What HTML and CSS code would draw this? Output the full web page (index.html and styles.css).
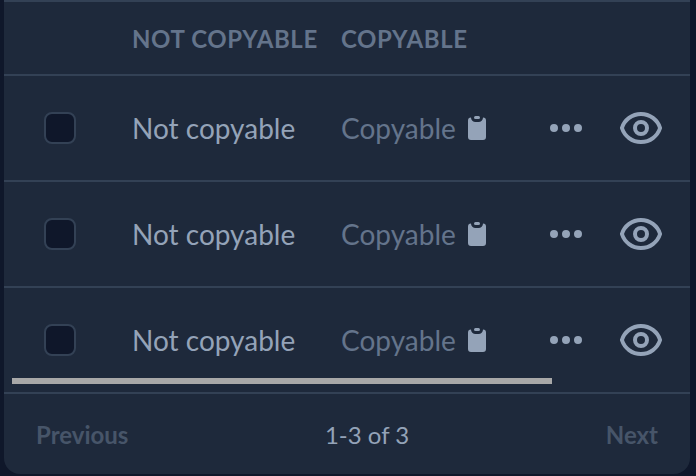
FILE: index.html
```html
<!DOCTYPE html>
<html lang="en">
<head>
<meta charset="utf-8">
<title>Table</title>
<link rel="stylesheet" href="styles.css">
</head>
<body>
<div class="card">
  <div class="row head">
    <div class="cell-check"></div>
    <div class="cell-a">NOT COPYABLE</div>
    <div class="cell-b">COPYABLE</div>
  </div>
  <div class="row">
    <div class="cell-check"><span class="checkbox"></span></div>
    <div class="cell-a">Not copyable</div>
    <div class="cell-b">Copyable <svg class="clip" viewBox="0 0 20 20" fill="currentColor"><path d="M8 3a1 1 0 011-1h2a1 1 0 110 2H9a1 1 0 01-1-1z"/><path d="M6 3a2 2 0 00-2 2v11a2 2 0 002 2h8a2 2 0 002-2V5a2 2 0 00-2-2 3 3 0 01-3 3H9a3 3 0 01-3-3z"/></svg></div>
    <svg class="dots" viewBox="0 0 20 20" fill="currentColor"><path d="M6 10a2 2 0 11-4 0 2 2 0 014 0zM12 10a2 2 0 11-4 0 2 2 0 014 0zM16 12a2 2 0 100-4 2 2 0 000 4z"/></svg>
    <svg class="eye" viewBox="0 0 24 24" fill="none" stroke="currentColor" stroke-width="2" stroke-linecap="round" stroke-linejoin="round"><path d="M15 12a3 3 0 11-6 0 3 3 0 016 0z"/><path d="M2.458 12C3.732 7.943 7.523 5 12 5c4.478 0 8.268 2.943 9.542 7-1.274 4.057-5.064 7-9.542 7-4.477 0-8.268-2.943-9.542-7z"/></svg>
  </div>
  <div class="row">
    <div class="cell-check"><span class="checkbox"></span></div>
    <div class="cell-a">Not copyable</div>
    <div class="cell-b">Copyable <svg class="clip" viewBox="0 0 20 20" fill="currentColor"><path d="M8 3a1 1 0 011-1h2a1 1 0 110 2H9a1 1 0 01-1-1z"/><path d="M6 3a2 2 0 00-2 2v11a2 2 0 002 2h8a2 2 0 002-2V5a2 2 0 00-2-2 3 3 0 01-3 3H9a3 3 0 01-3-3z"/></svg></div>
    <svg class="dots" viewBox="0 0 20 20" fill="currentColor"><path d="M6 10a2 2 0 11-4 0 2 2 0 014 0zM12 10a2 2 0 11-4 0 2 2 0 014 0zM16 12a2 2 0 100-4 2 2 0 000 4z"/></svg>
    <svg class="eye" viewBox="0 0 24 24" fill="none" stroke="currentColor" stroke-width="2" stroke-linecap="round" stroke-linejoin="round"><path d="M15 12a3 3 0 11-6 0 3 3 0 016 0z"/><path d="M2.458 12C3.732 7.943 7.523 5 12 5c4.478 0 8.268 2.943 9.542 7-1.274 4.057-5.064 7-9.542 7-4.477 0-8.268-2.943-9.542-7z"/></svg>
  </div>
  <div class="row">
    <div class="cell-check"><span class="checkbox"></span></div>
    <div class="cell-a">Not copyable</div>
    <div class="cell-b">Copyable <svg class="clip" viewBox="0 0 20 20" fill="currentColor"><path d="M8 3a1 1 0 011-1h2a1 1 0 110 2H9a1 1 0 01-1-1z"/><path d="M6 3a2 2 0 00-2 2v11a2 2 0 002 2h8a2 2 0 002-2V5a2 2 0 00-2-2 3 3 0 01-3 3H9a3 3 0 01-3-3z"/></svg></div>
    <svg class="dots" viewBox="0 0 20 20" fill="currentColor"><path d="M6 10a2 2 0 11-4 0 2 2 0 014 0zM12 10a2 2 0 11-4 0 2 2 0 014 0zM16 12a2 2 0 100-4 2 2 0 000 4z"/></svg>
    <svg class="eye" viewBox="0 0 24 24" fill="none" stroke="currentColor" stroke-width="2" stroke-linecap="round" stroke-linejoin="round"><path d="M15 12a3 3 0 11-6 0 3 3 0 016 0z"/><path d="M2.458 12C3.732 7.943 7.523 5 12 5c4.478 0 8.268 2.943 9.542 7-1.274 4.057-5.064 7-9.542 7-4.477 0-8.268-2.943-9.542-7z"/></svg>
    <div class="scrollbar"></div>
  </div>
  <div class="footer">
    <span class="pager-link">Previous</span>
    <span class="pager-count">1-3 of 3</span>
    <span class="pager-link">Next</span>
  </div>
</div>
</body>
</html>
```
FILE: styles.css
```css
* { box-sizing: border-box; }
html, body { margin: 0; height: 476px; overflow: hidden; }
body {
  background: #0f172a;
  font-family: "Lato", "Liberation Sans", sans-serif;
  padding: 0 6px 2px 4px;
}
.card {
  height: 474px;
  background: #1e293b;
  border-top: 2px solid #334155;
  border-radius: 0 0 16px 16px;
}
.row {
  position: relative;
  display: flex;
  align-items: center;
  height: 106px;
  border-bottom: 2px solid #334155;
  font-size: 28px;
  font-weight: 400;
}
.head {
  height: 74px;
  font-size: 24px;
  font-weight: 700;
  color: #64748b;
  letter-spacing: 0.6px;
}
.head .cell-a, .head .cell-b { color: #64748b; }
.cell-check { width: 128px; padding-left: 40px; display: flex; }
.cell-a { width: 209px; color: #94a3b8; }
.cell-b { width: 205px; color: #64748b; display: flex; align-items: center; gap: 6px; }
.checkbox {
  display: block;
  width: 32px;
  height: 32px;
  background: #0f172a;
  border: 2px solid #334155;
  border-radius: 8px;
}
.clip { width: 30px; height: 30px; color: #94a3b8; flex: none; }
.dots { width: 40px; height: 40px; color: #94a3b8; flex: none; }
.eye { width: 48px; height: 48px; color: #94a3b8; flex: none; margin-left: 31px; }
.scrollbar {
  position: absolute;
  left: 8px;
  bottom: 8px;
  width: 540px;
  height: 6px;
  background: #a8a8a8;
}
.footer {
  display: flex;
  justify-content: space-between;
  align-items: center;
  height: 80px;
  padding: 0 32px;
  font-size: 24px;
}
.pager-link { font-weight: 700; color: #475569; }
.pager-count { color: #94a3b8; }
```
